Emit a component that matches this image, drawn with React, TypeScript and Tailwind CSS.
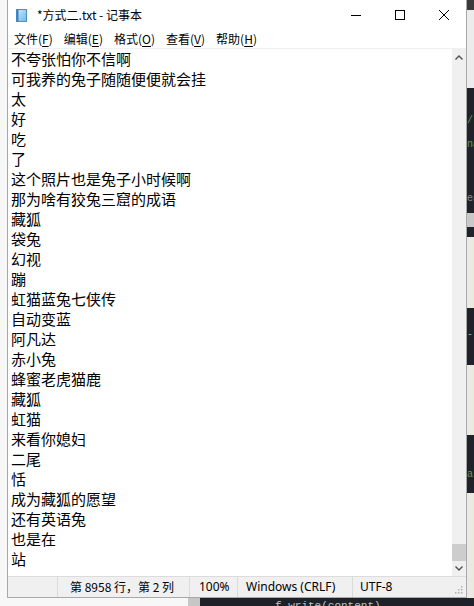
import React from "react";

const lines = [
  "不夸张怕你不信啊",
  "可我养的兔子随随便便就会挂",
  "太",
  "好",
  "吃",
  "了",
  "这个照片也是兔子小时候啊",
  "那为啥有狡兔三窟的成语",
  "藏狐",
  "袋兔",
  "幻视",
  "蹦",
  "虹猫蓝兔七侠传",
  "自动变蓝",
  "阿凡达",
  "赤小兔",
  "蜂蜜老虎猫鹿",
  "藏狐",
  "虹猫",
  "来看你媳妇",
  "二尾",
  "恬",
  "成为藏狐的愿望",
  "还有英语兔",
  "也是在",
  "站",
];

const cjk = { fontFamily: '"Noto Sans CJK SC", "Noto Sans", sans-serif' };
const ui = { fontFamily: '"Noto Sans", "Noto Sans CJK SC", sans-serif' };

function MenuItem({ label, k }: { label: string; k: string }) {
  return (
    <span className="px-[5px] leading-[18px]">
      {label}(<span className="underline underline-offset-2">{k}</span>)
    </span>
  );
}

export default function App() {
  return (
    <div className="w-[474px] h-[606px] overflow-hidden bg-white flex flex-col">
      <div className="flex h-[598px]">
        <div className="w-[7px] bg-[#f7f7f7]" />
        <div className="w-[460px] flex flex-col bg-white border-l border-r border-b border-[#a8a8a8]">
          {/* title bar */}
          <div className="h-[30px] flex items-center" style={cjk}>
            <div className="ml-[8px] mr-[10px] flex items-center">
              <svg width="11" height="13" viewBox="0 0 11 13">
                <defs>
                  <linearGradient id="g" x1="0" y1="0" x2="1" y2="1">
                    <stop offset="0" stopColor="#cfeafc" />
                    <stop offset="1" stopColor="#6fb6e6" />
                  </linearGradient>
                </defs>
                <rect x="0.5" y="0.5" width="10" height="12" fill="url(#g)" stroke="#4f8fc0" />
                <rect x="0.5" y="0.5" width="2" height="12" fill="#3f7fb5" />
              </svg>
            </div>
            <span className="text-[12px] text-black leading-none">*方式二.txt - 记事本</span>
            <div className="ml-auto flex h-full">
              <div className="w-[44px] flex items-center justify-center">
                <svg width="10" height="10" viewBox="0 0 10 10">
                  <line x1="0" y1="5.5" x2="10" y2="5.5" stroke="#000" strokeWidth="1" />
                </svg>
              </div>
              <div className="w-[44px] flex items-center justify-center">
                <svg width="10" height="10" viewBox="0 0 10 10">
                  <rect x="0.5" y="0.5" width="9" height="9" fill="none" stroke="#000" strokeWidth="1" />
                </svg>
              </div>
              <div className="w-[44px] flex items-center justify-center">
                <svg width="10" height="10" viewBox="0 0 10 10">
                  <path d="M0 0 L10 10 M10 0 L0 10" stroke="#000" strokeWidth="1" />
                </svg>
              </div>
            </div>
          </div>
          {/* menu bar */}
          <div className="h-[18px] flex items-center pl-[1px] text-[12px] text-black gap-[1px]" style={cjk}>
            <MenuItem label="文件" k="F" />
            <MenuItem label="编辑" k="E" />
            <MenuItem label="格式" k="O" />
            <MenuItem label="查看" k="V" />
            <MenuItem label="帮助" k="H" />
          </div>
          {/* content */}
          <div className="flex-1 flex border-t border-[#f0f0f0] min-h-0">
            <div className="flex-1 pl-[3px] overflow-hidden text-[15px] leading-[20px] text-black" style={cjk}>
              {lines.map((l, i) => (
                <div key={i} className="whitespace-nowrap">{l}</div>
              ))}
            </div>
            <div className="w-[14px] bg-[#f0f0f0] flex flex-col">
              <div className="h-[17px] flex items-center justify-center">
                <svg width="8" height="5" viewBox="0 0 8 5">
                  <path d="M0.5 4.5 L4 1 L7.5 4.5" fill="none" stroke="#505050" strokeWidth="1.4" />
                </svg>
              </div>
              <div className="flex-1" />
              <div className="h-[17px] bg-[#cdcdcd]" />
              <div className="h-[15px] flex items-center justify-center">
                <svg width="8" height="5" viewBox="0 0 8 5">
                  <path d="M0.5 0.5 L4 4 L7.5 0.5" fill="none" stroke="#505050" strokeWidth="1.4" />
                </svg>
              </div>
            </div>
          </div>
          {/* status bar */}
          <div className="h-[21px] flex bg-[#f0f0f0] border-t border-[#dcdcdc] text-[12px] text-black items-stretch" style={ui}>
            <div className="w-[50px] border-r border-[#dadada]" />
            <div className="w-[132px] border-r border-[#dadada] flex items-center pl-[12px]" style={cjk}>
              第 8958 行，第 2 列
            </div>
            <div className="w-[48px] border-r border-[#dadada] flex items-center pl-[9px]">100%</div>
            <div className="w-[115px] border-r border-[#dadada] flex items-center pl-[8px]">Windows (CRLF)</div>
            <div className="flex-1 flex items-center pl-[7px] relative">
              UTF-8
              <svg className="absolute right-[3px] bottom-[3px]" width="8" height="8" viewBox="0 0 8 8">
                <rect x="6" y="0" width="1.5" height="1.5" fill="#b0b0b0" />
                <rect x="3" y="3" width="1.5" height="1.5" fill="#b0b0b0" />
                <rect x="6" y="3" width="1.5" height="1.5" fill="#b0b0b0" />
                <rect x="0" y="6" width="1.5" height="1.5" fill="#b0b0b0" />
                <rect x="3" y="6" width="1.5" height="1.5" fill="#b0b0b0" />
                <rect x="6" y="6" width="1.5" height="1.5" fill="#b0b0b0" />
              </svg>
            </div>
          </div>
        </div>
        {/* background strip on the right */}
        <div className="w-[7px] flex flex-col overflow-hidden text-[10px] leading-[10px]" style={{ fontFamily: '"Liberation Mono", monospace' }}>
          <div className="h-[10px] bg-[#3a3a3a]" />
          <div className="h-[78px] bg-[#ececec]" />
          <div className="h-[125px] bg-[#1f2329] flex flex-col">
            <div className="h-[28px]" />
            <div className="text-[#6a9955] whitespace-nowrap">/</div>
            <div className="h-[14px]" />
            <div className="text-[#6a9955] whitespace-nowrap">na</div>
            <div className="h-[44px]" />
            <div className="text-[#8a8a8a] whitespace-nowrap">ea</div>
          </div>
          <div className="h-[14px] bg-[#c8c8c8]" />
          <div className="h-[10px] bg-[#1f2329]" />
          <div className="h-[71px] bg-[#eceae0]" />
          <div className="h-[57px] bg-[#1f2329] pt-[22px] text-[#4ec9b0] whitespace-nowrap">-</div>
          <div className="h-[70px] bg-[#eceae0]" />
          <div className="h-[58px] bg-[#1f2329] pt-[35px] text-[#6a9955] whitespace-nowrap">a</div>
          <div className="flex-1 bg-[#eceae0]" />
        </div>
      </div>
      {/* background strip at the bottom */}
      <div className="h-[8px] flex">
        <div className="w-[188px] bg-[#f7f7f7]" />
        <div className="w-[12px] bg-[#c6c6c6]" />
        <div className="flex-1 bg-[#1e2228] overflow-hidden">
          <div
            className="pl-[75px] pt-[2px] text-[11px] leading-[12px] text-[#b8c4cc] whitespace-nowrap"
            style={{ fontFamily: '"Liberation Mono", monospace' }}
          >
            f.write(content)
          </div>
        </div>
      </div>
    </div>
  );
}
